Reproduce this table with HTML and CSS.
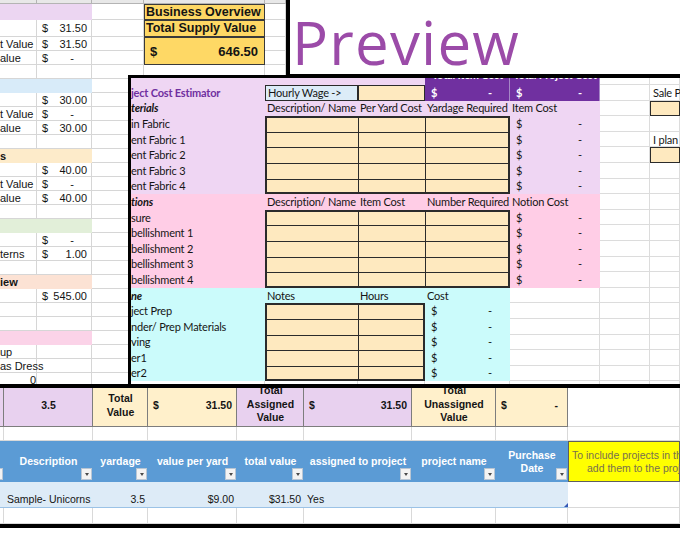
FILE: index.html
```html
<!DOCTYPE html>
<html>
<head>
<meta charset="utf-8">
<link rel="stylesheet" href="styles.css">
</head>
<body>
<div class="tl">
  <span class="h"></span><span class="h"></span><span class="h"></span><span class="h"></span><span class="h"></span>
  <span class="pk"></span><span class="pk"></span><span></span><span class="bo">Business Overview</span><span></span>
  <span></span><span class="acc"><span>$</span><span>31.50</span></span><span></span><span class="bo">Total Supply Value</span><span></span>
  <span>t Value</span><span class="acc"><span>$</span><span>31.50</span></span><span></span><span class="bo big"><span>$</span><span>646.50</span></span><span></span>
  <span>alue</span><span class="acc"><span>$</span><span class="d">-</span></span><span></span><span></span>
  <span></span><span></span><span></span><span></span><span></span>
  <span class="bl"></span><span class="bl"></span><span></span><span></span><span></span>
  <span></span><span class="acc"><span>$</span><span>30.00</span></span><span></span><span></span><span></span>
  <span>t Value</span><span class="acc"><span>$</span><span class="d">-</span></span><span></span><span></span><span></span>
  <span>alue</span><span class="acc"><span>$</span><span>30.00</span></span><span></span><span></span><span></span>
  <span></span><span></span><span></span><span></span><span></span>
  <span class="pe b">s</span><span class="pe"></span><span></span><span></span><span></span>
  <span></span><span class="acc"><span>$</span><span>40.00</span></span><span></span><span></span><span></span>
  <span>t Value</span><span class="acc"><span>$</span><span class="d">-</span></span><span></span><span></span><span></span>
  <span>alue</span><span class="acc"><span>$</span><span>40.00</span></span><span></span><span></span><span></span>
  <span></span><span></span><span></span><span></span><span></span>
  <span class="gr"></span><span class="gr"></span><span></span><span></span><span></span>
  <span></span><span class="acc"><span>$</span><span class="d">-</span></span><span></span><span></span><span></span>
  <span>terns</span><span class="acc"><span>$</span><span>1.00</span></span><span></span><span></span><span></span>
  <span></span><span></span><span></span><span></span><span></span>
  <span class="sa b">iew</span><span class="sa"></span><span></span><span></span><span></span>
  <span></span><span class="acc"><span>$</span><span>545.00</span></span><span></span><span></span><span></span>
  <span></span><span></span><span></span><span></span><span></span>
  <span></span><span></span><span></span><span></span><span></span>
  <span class="pk2"></span><span class="pk2"></span><span></span><span></span><span></span>
  <span>up</span><span></span><span></span><span></span><span></span>
  <span>as Dress</span><span></span><span></span><span></span><span></span>
  <span class="rt">0</span><span></span><span></span><span></span><span></span>
</div>

<div class="pv"><span class="pvt">Preview</span></div>

<div class="mp">
  <div class="mg">
    <span class="m1"></span><span class="m1"></span><span class="m1"></span><span class="pu ct top">Total Item Cost</span><span class="pu ct top">Total Project Cost</span><span></span><span></span>
    <span class="m1 ttl">ject Cost Estimator</span><span class="hw">Hourly Wage -&gt;</span><span class="y box"></span><span class="pu acc"><span>$</span><span class="d">-</span></span><span class="pu acc"><span>$</span><span class="d">-</span></span><span></span><span class="gt">Sale P</span>
    <span class="m1 bi">terials</span><span class="m1">Description/ Name</span><span class="m1">Per Yard Cost</span><span class="m1">Yardage Required</span><span class="m1">Item Cost</span><span></span><span class="y box"></span>
    <span class="m1">in Fabric</span><span class="y et el"></span><span class="y et"></span><span class="y et er"></span><span class="m1 acc"><span>$</span><span class="d">-</span></span><span></span><span></span>
    <span class="m1">ent Fabric 1</span><span class="y el"></span><span class="y"></span><span class="y er"></span><span class="m1 acc"><span>$</span><span class="d">-</span></span><span></span><span class="gt">I plan</span>
    <span class="m1">ent Fabric 2</span><span class="y el"></span><span class="y"></span><span class="y er"></span><span class="m1 acc"><span>$</span><span class="d">-</span></span><span></span><span class="y box"></span>
    <span class="m1">ent Fabric 3</span><span class="y el"></span><span class="y"></span><span class="y er"></span><span class="m1 acc"><span>$</span><span class="d">-</span></span><span></span><span></span>
    <span class="m1">ent Fabric 4</span><span class="y el eb"></span><span class="y eb"></span><span class="y er eb"></span><span class="m1 acc"><span>$</span><span class="d">-</span></span><span></span><span></span>
    <span class="np bi">tions</span><span class="np">Description/ Name</span><span class="np">Item Cost</span><span class="np">Number Required</span><span class="np">Notion Cost</span><span></span><span></span>
    <span class="np">sure</span><span class="y et el"></span><span class="y et"></span><span class="y et er"></span><span class="np acc"><span>$</span><span class="d">-</span></span><span></span><span></span>
    <span class="np">bellishment 1</span><span class="y el"></span><span class="y"></span><span class="y er"></span><span class="np acc"><span>$</span><span class="d">-</span></span><span></span><span></span>
    <span class="np">bellishment 2</span><span class="y el"></span><span class="y"></span><span class="y er"></span><span class="np acc"><span>$</span><span class="d">-</span></span><span></span><span></span>
    <span class="np">bellishment 3</span><span class="y el"></span><span class="y"></span><span class="y er"></span><span class="np acc"><span>$</span><span class="d">-</span></span><span></span><span></span>
    <span class="np">bellishment 4</span><span class="y el eb"></span><span class="y eb"></span><span class="y er eb"></span><span class="np acc"><span>$</span><span class="d">-</span></span><span></span><span></span>
    <span class="cy bi">ne</span><span class="cy">Notes</span><span class="cy">Hours</span><span class="cy">Cost</span><span></span><span></span><span></span>
    <span class="cy">ject Prep</span><span class="y et el"></span><span class="y et er"></span><span class="cy acc"><span>$</span><span class="d">-</span></span><span></span><span></span><span></span>
    <span class="cy">nder/ Prep Materials</span><span class="y el"></span><span class="y er"></span><span class="cy acc"><span>$</span><span class="d">-</span></span><span></span><span></span><span></span>
    <span class="cy">ving</span><span class="y el"></span><span class="y er"></span><span class="cy acc"><span>$</span><span class="d">-</span></span><span></span><span></span><span></span>
    <span class="cy">er1</span><span class="y el"></span><span class="y er"></span><span class="cy acc"><span>$</span><span class="d">-</span></span><span></span><span></span><span></span>
    <span class="cy">er2</span><span class="y el eb"></span><span class="y er eb"></span><span class="cy acc"><span>$</span><span class="d">-</span></span><span></span><span></span><span></span>
    <span></span><span></span><span></span><span></span><span></span><span></span><span></span>
  </div>
</div>

<div class="bp">
  <div class="bg">
    <span class="bpk"></span><span class="bpk b ct">3.5</span><span class="byl b ct"><span>Total<br>Value</span></span><span class="byl b acc"><span>$</span><span>31.50</span></span><span class="bpk b ct up"><span>Total<br>Assigned<br>Value</span></span><span class="bpk b acc"><span>$</span><span>31.50</span></span><span class="byl b ct up"><span>Total<br>Unassigned<br>Value</span></span><span class="byl b acc"><span>$</span><span class="d">-</span></span><span></span>
    <span></span><span></span><span></span><span></span><span></span><span></span><span></span><span></span><span></span>
    <span class="hd"><span class="fb"></span></span><span class="hd"><span>Description</span><span class="fb"></span></span><span class="hd"><span>yardage</span><span class="fb"></span></span><span class="hd"><span>value per yard</span><span class="fb"></span></span><span class="hd"><span>total value</span><span class="fb"></span></span><span class="hd"><span>assigned to project</span><span class="fb"></span></span><span class="hd"><span>project name</span><span class="fb"></span></span><span class="hd"><span>Purchase<br>Date</span><span class="fb"></span></span><span class="note"><span class="n1">To include projects in the list,</span><span class="n2">add them to the project tab</span></span>
    <span class="dt"></span><span class="dt">Sample- Unicorns</span><span class="dt rt">3.5</span><span class="dt rt">$9.00</span><span class="dt rt">$31.50</span><span class="dt">Yes</span><span class="dt"></span><span class="dt"><span class="rs"></span></span><span></span>
    <span></span><span></span><span></span><span></span><span></span><span></span><span></span><span></span><span></span>
  </div>
</div>
</body>
</html>
```

FILE: styles.css
```css
* { box-sizing: border-box; margin: 0; padding: 0; }
html, body { width: 680px; height: 540px; overflow: hidden; background: #fff; }
body { position: relative; font-family: "Liberation Sans", Arial, sans-serif; color: #141414; }

/* ---------- back sheet (top-left) ---------- */
.tl {
  display: grid;
  width: 286px;
  height: 388px;
  overflow: hidden;
  grid-template-columns: 37px 55px 52px 121px 21px;
  grid-template-rows: 4px 16px 17px repeat(25, 14px);
  font-size: 11px;
}
.tl > span {
  display: flex;
  align-items: center;
  white-space: nowrap;
  line-height: 13px;
  box-shadow: inset -1px -1px 0 #d6d6d6;
}
.tl .h { background: #e8e8e8; box-shadow: inset -1px -1px 0 #b4b4b4; }
.tl .pk { background: #ecd6f2; box-shadow: none; }
.tl .bl { background: #d8ebf9; box-shadow: none; }
.tl .pe { background: #fdebca; box-shadow: none; }
.tl .gr { background: #e2efd9; box-shadow: none; }
.tl .sa { background: #fce2d4; box-shadow: none; }
.tl .pk2 { background: #fbd3e8; box-shadow: none; }
.tl .acc { justify-content: space-between; padding: 0 5px; }
.tl .acc .d { padding-right: 13px; }
.tl .rt { justify-content: flex-end; padding-right: 1px; }
.b { font-weight: 700; }
.tl .bo {
  background: #fed865;
  box-shadow: inset 0 0 0 1px #3a3a3a;
  font-weight: 700;
  font-size: 12.5px;
  padding-left: 2px;
}
.tl .big { grid-row: span 2; justify-content: space-between; padding: 0 7px 0 6px; font-size: 13px; }

/* ---------- preview banner ---------- */
.pv {
  position: absolute;
  left: 286px;
  top: 0;
  right: 0;
  height: 78px;
  background: #fff;
  border-left: 4px solid #000;
  border-bottom: 4px solid #000;
  padding: 12px 0 0 2px;
}
.pvt {
  display: block;
  font-family: "Open Sans", sans-serif;
  font-size: 60px;
  line-height: 60px;
  letter-spacing: 1.2px;
  color: #9b4ba8;
}

/* ---------- project cost estimator ---------- */
.mp {
  position: absolute;
  left: 128px;
  top: 75px;
  right: 0;
  height: 309px;
  background: #fff;
  border-left: 3px solid #000;
  border-top: 3px solid #000;
  overflow: hidden;
}
.mg {
  display: grid;
  margin-top: -8.6px;
  grid-template-columns: 134px 93px 67px 85px 90px 50px 30px;
  grid-template-rows: repeat(21, 15.6px);
  font-family: Lato, "Open Sans", sans-serif;
  font-size: 11px;
  letter-spacing: -0.2px;
  color: #151515;
}
.mg > span {
  display: flex;
  align-items: center;
  white-space: nowrap;
  line-height: 14px;
  padding-left: 2px;
  box-shadow: inset -1px -1px 0 #dcdcdc;
  overflow: hidden;
}
.mg > span:nth-child(7n+1) { padding-left: 0; overflow: visible; }
.mg .m1 { background: #efd6f3; box-shadow: none; }
.mg .np { background: #ffcde6; box-shadow: none; }
.mg .cy { background: #cbfbfb; box-shadow: none; }
.mg .pu { background: #7030a0; color: #fff; font-weight: 700; box-shadow: inset -1px 0 0 #a587c6; }
.mg .ct { justify-content: center; padding-left: 0; }
.mg .top { align-items: flex-start; line-height: 11px; padding-top: 0; }
.mg .ttl { color: #7030a0; font-weight: 700; }
.mg .bi { font-weight: 700; font-style: italic; }
.mg .hw { background: #dcecf8; box-shadow: inset 0 0 0 1px #2a2a2a; padding-left: 3px; }
.mg .gt { padding-left: 3px; }
.mg .acc { justify-content: space-between; padding: 0 0 0 6px; }
.mg .acc .d { padding-right: 18px; }
.mg .y {
  --t: 1px; --l: 1px; --r: 0px; --b: 0px;
  background: #fee9bf;
  box-shadow: inset 0 var(--t) 0 #2b2b2b, inset var(--l) 0 0 #2b2b2b,
              inset calc(-1 * var(--r)) 0 0 #2b2b2b, inset 0 calc(-1 * var(--b)) 0 #2b2b2b;
}
.mg .box { --t: 1px; --l: 1px; --r: 1px; --b: 1px; }
.mg .et { --t: 2px; }
.mg .el { --l: 2px; }
.mg .er { --r: 2px; }
.mg .eb { --b: 2px; }

/* ---------- fabric inventory ---------- */
.bp {
  position: absolute;
  left: 0;
  top: 384px;
  width: 680px;
  height: 144px;
  background: #fff;
  border-top: 4px solid #000;
  border-bottom: 4px solid #000;
  overflow: hidden;
}
.bg {
  display: grid;
  margin-top: -4px;
  grid-template-columns: 4px 89px 55px 89px 67px 108px 84px 72px 112px;
  grid-template-rows: 43px 14px 41px 26px 16px;
  font-size: 10.5px;
}
.bg > span {
  display: flex;
  align-items: center;
  white-space: nowrap;
  line-height: 13.5px;
  box-shadow: inset -1px -1px 0 #d9d9d9;
}
.bg .bpk { background: #e8d1ef; box-shadow: inset -1px -1px 0 #7d7d7d; }
.bg .byl { background: #fff0cb; box-shadow: inset -1px -1px 0 #7d7d7d; }
.bg .ct { justify-content: center; text-align: center; }
.bg .up { padding-bottom: 2px; }
.bg .acc { justify-content: space-between; padding: 0 5px 0 5px; }
.bg .acc .d { padding-right: 5px; }
.bg .hd {
  position: relative;
  background: #5b9bd5;
  color: #fff;
  font-weight: 700;
  justify-content: center;
  text-align: center;
  box-shadow: none;
  line-height: 13px;
}
.fb {
  position: absolute;
  right: 1px;
  bottom: 2px;
  width: 11px;
  height: 12px;
  background: #f3f3f3;
  border: 1px solid #b9c6d4;
}
.fb::after {
  content: "";
  position: absolute;
  left: 2.5px;
  top: 4px;
  border-left: 2.5px solid transparent;
  border-right: 2.5px solid transparent;
  border-top: 3px solid #4a4a4a;
}
.bg .note {
  background: #ffff00;
  box-shadow: inset 0 0 0 1px #5e5e5e;
  flex-direction: column;
  align-items: flex-start;
  justify-content: center;
  overflow: hidden;
  color: #77704f;
  line-height: 13px;
}
.n1 { padding-left: 4px; }
.n2 { padding-left: 19px; }
.bg .dt {
  position: relative;
  background: #ddebf7;
  align-items: flex-end;
  padding: 0 3px 2px 3px;
  box-shadow: inset 0 -1px 0 #9bc2e6;
}
.bg .rt { justify-content: flex-end; }
.rs {
  position: absolute;
  right: 0;
  bottom: 1px;
  border-left: 4px solid transparent;
  border-bottom: 4px solid #3457b5;
}
```
